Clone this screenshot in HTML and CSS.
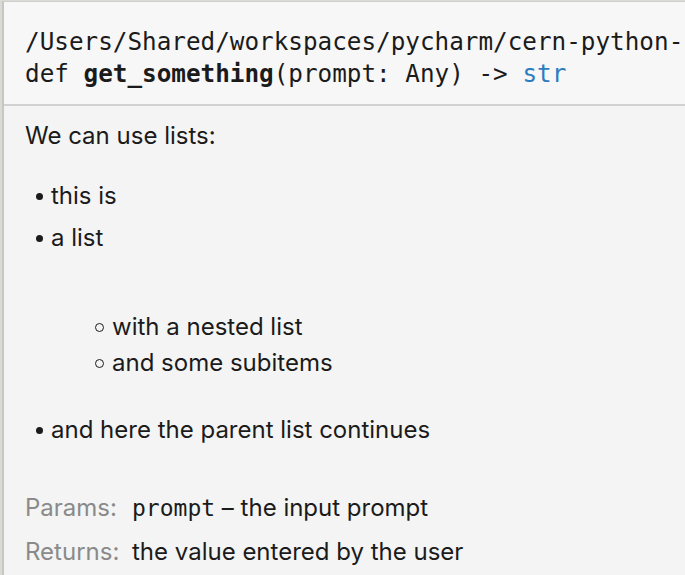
FILE: index.html
```html
<!DOCTYPE html>
<html>
<head>
<meta charset="utf-8">
<link rel="stylesheet" href="styles.css">
</head>
<body>
<div class="popup">
  <div class="header">
    <div class="code-line">/Users/Shared/workspaces/pycharm/cern-python-</div>
    <div class="code-line">def <b>get_something</b>(prompt: Any) -&gt; <span class="type">str</span></div>
  </div>
  <div class="content">
    <p class="intro">We can use lists:</p>
    <ul class="list">
      <li>this is</li>
      <li>a list
        <ul class="nested">
          <li>with a nested list</li>
          <li>and some subitems</li>
        </ul>
      </li>
      <li>and here the parent list continues</li>
    </ul>
    <div class="sections">
      <div class="label">Params:</div>
      <div class="value"><code>prompt</code> – the input prompt</div>
      <div class="label">Returns:</div>
      <div class="value">the value entered by the user</div>
    </div>
  </div>
</div>
</body>
</html>
```
FILE: styles.css
```css
html, body {
  margin: 0;
  padding: 0;
  background: #dcdad5;
  overflow: hidden;
}
.popup {
  margin: 1px 0 0 2px;
  height: 574px;
  border-top: 1px solid #cfcfcf;
  border-left: 2px solid #c6c6c6;
  background: #f4f4f4;
  overflow: hidden;
}
.header {
  background: #f7f7f7;
  padding: 24px 0 14px 21px;
  border-bottom: 2px solid #d2d2d2;
  font-family: "DejaVu Sans Mono", monospace;
  font-size: 24.3px;
  color: #1b1b1b;
  white-space: nowrap;
}
.code-line {
  line-height: 32px;
}
.code-line b {
  font-weight: bold;
}
.type {
  color: #2b7cc0;
}
.content {
  padding: 14px 0 0 21px;
  font-family: Inter, "Open Sans", sans-serif;
  font-size: 24px;
  color: #1b1b1b;
}
.intro {
  margin: 0;
  line-height: 32px;
}
.list {
  list-style: none;
  margin: 23px 0 0 0;
  padding: 0;
}
.list > li {
  position: relative;
  padding-left: 26px;
  line-height: 42px;
}
.list > li::before {
  content: "";
  position: absolute;
  left: 11px;
  top: 18px;
  width: 7px;
  height: 7px;
  border-radius: 50%;
  background: #1b1b1b;
}
.nested {
  list-style: none;
  margin: 50px 0 28px 0;
  padding: 0 0 0 34px;
}
.nested > li {
  position: relative;
  padding-left: 27px;
  line-height: 36px;
}
.nested > li::before {
  content: "";
  position: absolute;
  left: 10px;
  top: 14px;
  width: 9px;
  height: 9px;
  border-radius: 50%;
  border: 1.7px solid #1b1b1b;
  box-sizing: border-box;
}
.sections {
  display: grid;
  grid-template-columns: 107px auto;
  margin-top: 35px;
  padding-left: 0;
  line-height: 43px;
}
.label {
  color: #8a8a8a;
}
.value code {
  font-family: "DejaVu Sans Mono", monospace;
  font-size: 23px;
}
```
